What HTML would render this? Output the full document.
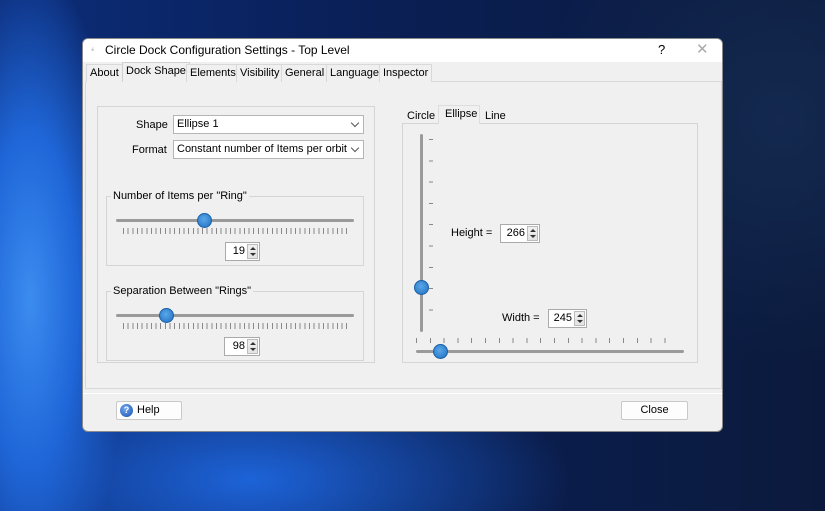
<!DOCTYPE html>
<html><head><style>
*{box-sizing:border-box;margin:0;padding:0}
body{width:825px;height:511px;overflow:hidden;position:relative;font-family:"Liberation Sans",sans-serif;font-size:11px;color:#000;
background:radial-gradient(ellipse 120px 420px at 30px 300px,#3b8cf0 0%,#1f66d8 40%,rgba(12,40,120,0) 80%),
radial-gradient(ellipse 400px 160px at 250px 480px,#1d63d8 0%,rgba(15,50,140,0) 80%),
radial-gradient(ellipse 300px 300px at 780px 120px,#14294f 0%,rgba(10,20,50,0) 80%),
linear-gradient(90deg,#0c2d7a 0%,#0a1f55 45%,#0b1a3c 100%);}
.a{position:absolute}
.dlg{left:82px;top:38px;width:641px;height:394px;background:#f0f0f0;border:1px solid #8a8a8a;border-radius:6px;overflow:hidden}
.title{left:0;top:0;width:100%;height:23px;background:#fff}
.tab{top:25px;height:18px;padding:0 3px;line-height:17px;font-size:11px;color:#000;border:1px solid #d9d9d9;border-bottom:none;background:#f0f0f0}
.box{border:1px solid #d5d5d5;background:#f0f0f0}
.combo{height:19px;background:#fff;border:1px solid #b5b5b5;line-height:17px;padding-left:3px}
.combo:after{content:"";position:absolute;right:5px;top:4px;width:5px;height:5px;border-right:1px solid #555;border-bottom:1px solid #555;transform:rotate(45deg)}
.track{height:3px;background:#9a9a9a;border-radius:2px}
.knob{width:15px;height:15px;border-radius:50%;background:radial-gradient(circle at 45% 40%,#5aa7e8,#1f6fc0);border:1px solid #1a5fa8}
.ticks{height:6px;background:repeating-linear-gradient(90deg,#888 0 1px,transparent 1px 4.65px)}
.spin{height:19px;background:#fff;border:1px solid #aaa;text-align:right;padding-right:14px;line-height:17px}
.spin i{position:absolute;right:1px;top:1px;width:11px;height:15px;border:1px solid #bbb;background:linear-gradient(#eee 0 50%,#e4e4e4 50%)}
.spin i:before{content:"";position:absolute;left:2px;top:2px;border-left:3px solid transparent;border-right:3px solid transparent;border-bottom:3px solid #333}
.spin i:after{content:"";position:absolute;left:2px;top:8px;border-left:3px solid transparent;border-right:3px solid transparent;border-top:3px solid #333}
.btn{height:19px;background:#fdfdfd;border:1px solid #c9c9c9;border-radius:2px;line-height:17px}
</style></head><body>
<div class="a dlg">
 <div class="a title">
  <div class="a" style="left:7px;top:5px;color:#aaa;font-size:9px">⍖</div>
  <div class="a" style="left:22px;top:4px;font-size:12px">Circle Dock Configuration Settings - Top Level</div>
  <div class="a" style="left:575px;top:3px;font-size:13px">?</div>
  <div class="a" style="left:613px;top:1px;font-size:15px;color:#aaa">✕</div>
 </div>
 <div class="a" style="left:2px;top:42px;width:637px;height:308px;border:1px solid #d9d9d9;background:#f0f0f0"></div>
 <div class="a tab" style="left:3px">About</div>
 <div class="a tab" style="left:39px;top:23px;height:20px;background:#f0f0f0;border-color:#d0d0d0">Dock Shape</div>
 <div class="a tab" style="left:103px">Elements</div>
 <div class="a tab" style="left:153px">Visibility</div>
 <div class="a tab" style="left:198px">General</div>
 <div class="a tab" style="left:243px">Language</div>
 <div class="a tab" style="left:296px">Inspector</div>

 <div class="a box" style="left:14px;top:67px;width:278px;height:257px"></div>
 <div class="a" style="left:53px;top:80px">Shape</div>
 <div class="a combo" style="left:90px;top:76px;width:191px">Ellipse 1</div>
 <div class="a" style="left:49px;top:105px">Format</div>
 <div class="a combo" style="left:90px;top:101px;width:191px">Constant number of Items per orbit</div>

 <div class="a box" style="left:23px;top:157px;width:258px;height:70px"></div>
 <div class="a" style="left:28px;top:151px;background:#f0f0f0;padding:0 2px">Number of Items per "Ring"</div>
 <div class="a track" style="left:33px;top:180px;width:238px"></div>
 <div class="a knob" style="left:114px;top:174px"></div>
 <div class="a ticks" style="left:40px;top:189px;width:225px"></div>
 <div class="a spin" style="left:142px;top:203px;width:35px">19<i></i></div>

 <div class="a box" style="left:23px;top:252px;width:258px;height:70px"></div>
 <div class="a" style="left:28px;top:246px;background:#f0f0f0;padding:0 2px">Separation Between "Rings"</div>
 <div class="a track" style="left:33px;top:275px;width:238px"></div>
 <div class="a knob" style="left:76px;top:269px"></div>
 <div class="a ticks" style="left:40px;top:284px;width:225px"></div>
 <div class="a spin" style="left:141px;top:298px;width:36px">98<i></i></div>

 <div class="a box" style="left:319px;top:84px;width:296px;height:240px"></div>
 <div class="a" style="left:324px;top:71px">Circle</div>
 <div class="a" style="left:355px;top:66px;width:42px;height:19px;background:#f0f0f0;border:1px solid #ddd;border-bottom:none;padding:2px 0 0 6px">Ellipse</div>
 <div class="a" style="left:402px;top:71px">Line</div>
 <div class="a" style="left:337px;top:95px;width:3px;height:198px;background:#9a9a9a;border-radius:2px"></div>
 <div class="a" style="left:346px;top:100px;width:4px;height:190px;background:repeating-linear-gradient(180deg,#888 0 1px,transparent 1px 21.3px)"></div>
 <div class="a knob" style="left:331px;top:241px"></div>
 <div class="a" style="left:368px;top:188px">Height =</div>
 <div class="a spin" style="left:417px;top:185px;width:40px">266<i></i></div>
 <div class="a" style="left:419px;top:273px">Width =</div>
 <div class="a spin" style="left:465px;top:270px;width:39px">245<i></i></div>
 <div class="a" style="left:333px;top:299px;width:262px;height:5px;background:repeating-linear-gradient(90deg,#888 0 1px,transparent 1px 13.8px)"></div>
 <div class="a track" style="left:333px;top:311px;width:268px"></div>
 <div class="a knob" style="left:350px;top:305px"></div>

 <div class="a" style="left:0;top:354px;width:100%;height:1px;background:#fff"></div>
 <div class="a btn" style="left:33px;top:362px;width:66px;padding-left:20px">Help
  <div class="a" style="left:3px;top:2px;width:13px;height:13px;border-radius:50%;background:radial-gradient(circle at 40% 35%,#6ea8f0,#1d4fb0);color:#fff;font-size:9px;font-weight:bold;text-align:center;line-height:13px">?</div></div>
 <div class="a btn" style="left:538px;top:362px;width:67px;text-align:center">Close</div>
</div>
</body></html>
